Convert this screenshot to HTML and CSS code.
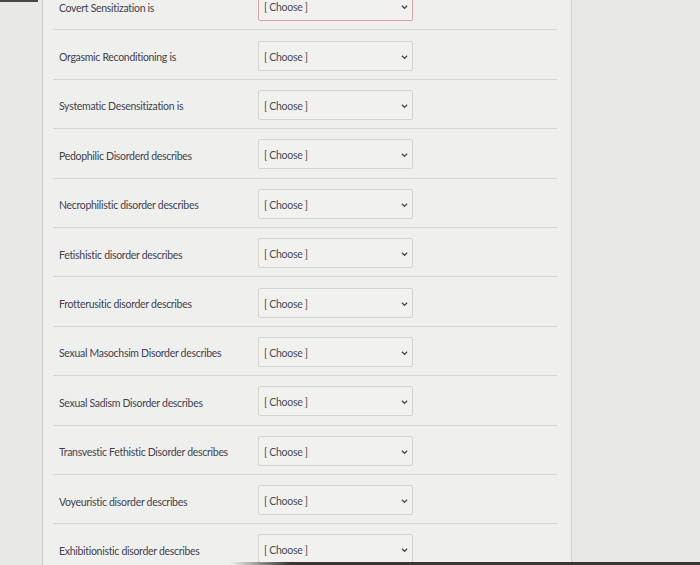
FILE: index.html
```html
<!DOCTYPE html>
<html lang="en">
<head>
  <meta charset="UTF-8" />
  <meta name="viewport" content="width=device-width, initial-scale=1.0" />
  <title>Matching Question</title>
  <link rel="stylesheet" href="styles.css">
</head>
<body>
  <div class="bezel-top"></div>

  <div class="question">
    <div class="answer">
      <label class="prompt">Covert Sensitization is</label>
      <div class="select invalid"><span>[ Choose ]</span><svg class="chev" viewBox="0 0 8 6"><path d="M1 1.5 L4 4.5 L7 1.5"/></svg></div>
    </div>
    <div class="answer">
      <label class="prompt">Orgasmic Reconditioning is</label>
      <div class="select"><span>[ Choose ]</span><svg class="chev" viewBox="0 0 8 6"><path d="M1 1.5 L4 4.5 L7 1.5"/></svg></div>
    </div>
    <div class="answer">
      <label class="prompt">Systematic Desensitization is</label>
      <div class="select"><span>[ Choose ]</span><svg class="chev" viewBox="0 0 8 6"><path d="M1 1.5 L4 4.5 L7 1.5"/></svg></div>
    </div>
    <div class="answer">
      <label class="prompt">Pedophilic Disorderd describes</label>
      <div class="select"><span>[ Choose ]</span><svg class="chev" viewBox="0 0 8 6"><path d="M1 1.5 L4 4.5 L7 1.5"/></svg></div>
    </div>
    <div class="answer">
      <label class="prompt">Necrophilistic disorder describes</label>
      <div class="select"><span>[ Choose ]</span><svg class="chev" viewBox="0 0 8 6"><path d="M1 1.5 L4 4.5 L7 1.5"/></svg></div>
    </div>
    <div class="answer">
      <label class="prompt">Fetishistic disorder describes</label>
      <div class="select"><span>[ Choose ]</span><svg class="chev" viewBox="0 0 8 6"><path d="M1 1.5 L4 4.5 L7 1.5"/></svg></div>
    </div>
    <div class="answer">
      <label class="prompt">Frotterusitic disorder describes</label>
      <div class="select"><span>[ Choose ]</span><svg class="chev" viewBox="0 0 8 6"><path d="M1 1.5 L4 4.5 L7 1.5"/></svg></div>
    </div>
    <div class="answer">
      <label class="prompt">Sexual Masochsim Disorder describes</label>
      <div class="select"><span>[ Choose ]</span><svg class="chev" viewBox="0 0 8 6"><path d="M1 1.5 L4 4.5 L7 1.5"/></svg></div>
    </div>
    <div class="answer">
      <label class="prompt">Sexual Sadism Disorder describes</label>
      <div class="select"><span>[ Choose ]</span><svg class="chev" viewBox="0 0 8 6"><path d="M1 1.5 L4 4.5 L7 1.5"/></svg></div>
    </div>
    <div class="answer">
      <label class="prompt">Transvestic Fethistic Disorder describes</label>
      <div class="select"><span>[ Choose ]</span><svg class="chev" viewBox="0 0 8 6"><path d="M1 1.5 L4 4.5 L7 1.5"/></svg></div>
    </div>
    <div class="answer">
      <label class="prompt">Voyeuristic disorder describes</label>
      <div class="select"><span>[ Choose ]</span><svg class="chev" viewBox="0 0 8 6"><path d="M1 1.5 L4 4.5 L7 1.5"/></svg></div>
    </div>
    <div class="answer">
      <label class="prompt">Exhibitionistic disorder describes</label>
      <div class="select"><span>[ Choose ]</span><svg class="chev" viewBox="0 0 8 6"><path d="M1 1.5 L4 4.5 L7 1.5"/></svg></div>
    </div>
  </div>

  <div class="bezel-bottom"></div>
</body>
</html>
```

FILE: styles.css
```css
body {
  margin: 0;
  height: 565px;
  overflow: hidden;
  background: #e8e8e6;
  color: #43434d;
  font-family: Lato, "Open Sans", sans-serif;
  position: relative;
}

.bezel-top {
  position: absolute;
  top: 0;
  left: 0;
  width: 38px;
  height: 2px;
  background: #4a4646;
}

.question {
  margin: -19px 0 0 42px;
  width: 530px;
  background: #efefed;
  border-left: 1px solid #c9c9c7;
  border-right: 1px solid #d2d2d0;
  padding: 0 14px 0 10px;
  box-sizing: border-box;
}

.answer {
  display: flex;
  align-items: center;
  height: 49.4px;
  padding: 10px 0 8px;
  box-sizing: border-box;
  border-bottom: 1px solid #d6d6d4;
}

.prompt {
  width: 205px;
  flex-shrink: 0;
  padding-left: 6px;
  padding-top: 3px;
  box-sizing: border-box;
  font-size: 10.5px;
  letter-spacing: -0.3px;
  white-space: nowrap;
}

.select {
  width: 155px;
  height: 30px;
  box-sizing: border-box;
  border: 1px solid #d3d3d1;
  border-radius: 2px;
  background: #f1f1ef;
  display: flex;
  align-items: center;
  justify-content: space-between;
  padding: 2px 4px 0 5px;
  font-size: 10.5px;
  letter-spacing: -0.3px;
  color: #4b4b55;
}

.select.invalid {
  border: 1.5px solid #d8a3ab;
}

.chev {
  width: 7px;
  height: 6px;
  fill: none;
  stroke: #4b4b55;
  stroke-width: 1.5;
}

.bezel-bottom {
  position: absolute;
  left: 0;
  right: 0;
  bottom: 0;
  height: 3px;
  background: linear-gradient(to right, rgba(60, 55, 53, 0) 0, rgba(60, 55, 53, 0) 230px, #3c3735 290px, #3c3735 100%);
}
```
